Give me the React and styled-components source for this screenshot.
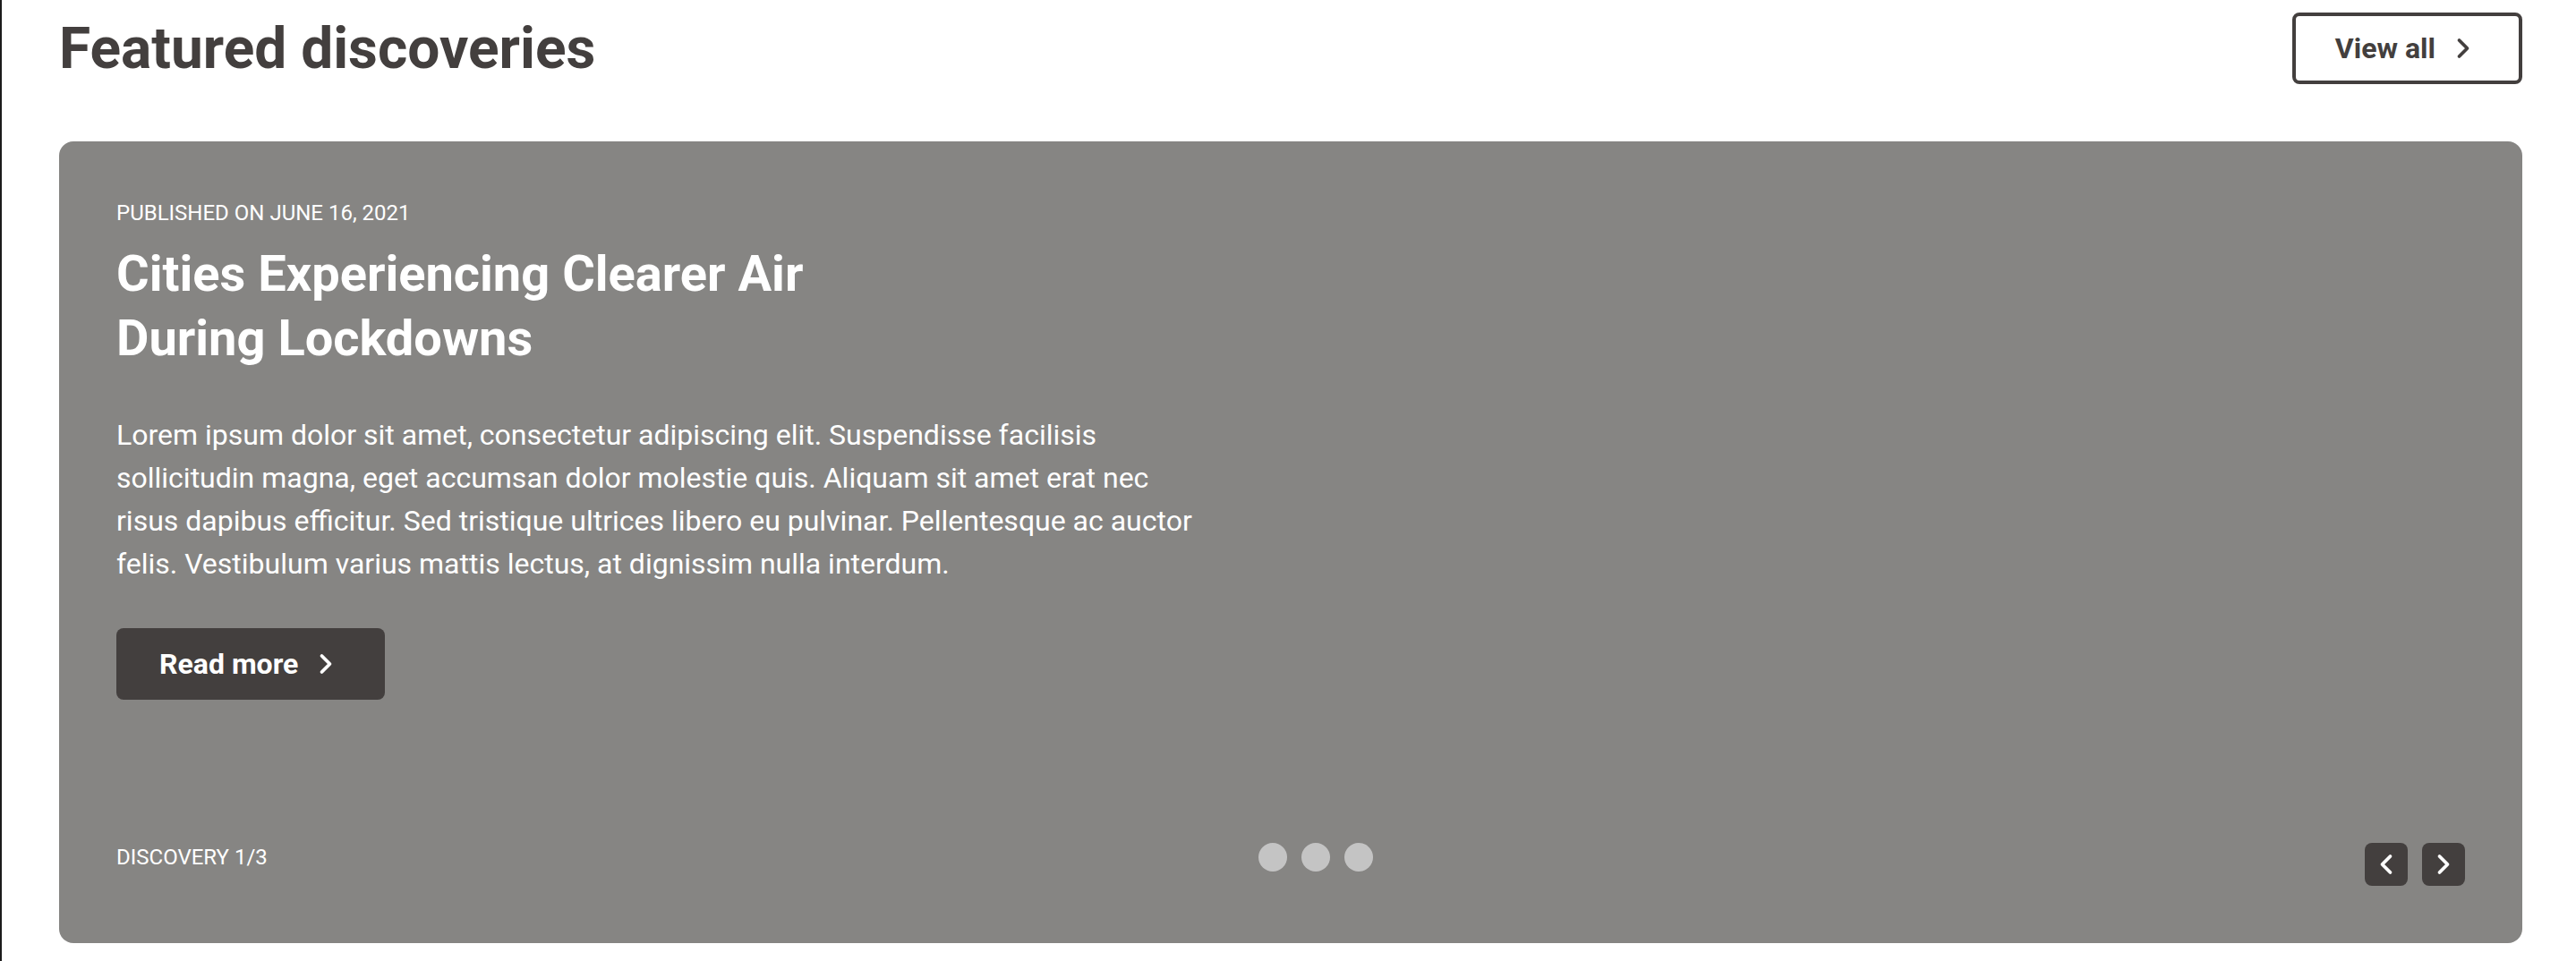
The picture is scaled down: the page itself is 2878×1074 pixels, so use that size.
import React, { useState } from 'react'
import styled, { createGlobalStyle } from 'styled-components'
import { ChevronLeft, ChevronRight } from 'lucide-react'

const GlobalStyle = createGlobalStyle`
    html, body {
        margin: 0;
        padding: 0;
        background: #ffffff;
    }
    * {
        box-sizing: border-box;
    }
`

const Page = styled.div`
    min-height: 100vh;
    border-left: 2px solid #1c1b1b;
    padding: 14px 60px 20px 64px;
    font-family: Roboto, 'Liberation Sans', sans-serif;
    color: #433f3e;
`

const Header = styled.div`
    display: flex;
    align-items: center;
    justify-content: space-between;
    margin-bottom: 64px;
`

const Title = styled.h2`
    margin: 0;
    font-size: 64px;
    font-weight: 700;
    line-height: 77px;
    color: #433f3e;
`

const Button = styled.button`
    display: inline-flex;
    align-items: center;
    gap: 13px;
    height: 80px;
    padding: 0 ${({ $outline }) => ($outline ? '44px' : '48px')};
    border: ${({ $outline }) => ($outline ? '4px solid #433f3e' : 'none')};
    border-radius: 8px;
    background: ${({ $outline }) => ($outline ? '#ffffff' : '#433f3e')};
    color: ${({ $outline }) => ($outline ? '#433f3e' : '#ffffff')};
    font-family: Roboto, 'Liberation Sans', sans-serif;
    font-size: 32px;
    font-weight: 700;
    line-height: 1;
    cursor: pointer;
`

const Card = styled.section`
    display: flex;
    flex-direction: column;
    justify-content: space-between;
    min-height: 896px;
    padding: 64px;
    border-radius: 16px;
    background: #868583;
    color: #ffffff;
`

const Content = styled.div`
    display: flex;
    flex-direction: column;
    align-items: flex-start;
`

const Meta = styled.div`
    font-size: 24px;
    line-height: 32px;
    text-transform: uppercase;
`

const Heading = styled.h3`
    margin: 16px 0 0;
    max-width: 880px;
    font-size: 56px;
    font-weight: 700;
    line-height: 72px;
`

const Body = styled.p`
    margin: 48px 0 48px;
    max-width: 1212px;
    font-size: 32px;
    line-height: 48px;
`

const Footer = styled.div`
    display: flex;
    align-items: flex-start;
    justify-content: space-between;
`

const Dots = styled.div`
    display: flex;
    gap: 16px;
`

const Dot = styled.span`
    width: 32px;
    height: 32px;
    border-radius: 50%;
    background: #c4c4c4;
    opacity: ${({ $active }) => ($active ? 1 : 1)};
`

const Nav = styled.div`
    display: flex;
    gap: 16px;
`

const NavButton = styled.button`
    display: flex;
    align-items: center;
    justify-content: center;
    width: 48px;
    height: 48px;
    padding: 0;
    border: none;
    border-radius: 8px;
    background: #433f3e;
    color: #ffffff;
    cursor: pointer;
`

const discoveries = [
    {
        date: 'June 16, 2021',
        title: 'Cities Experiencing Clearer Air During Lockdowns',
        text: 'Lorem ipsum dolor sit amet, consectetur adipiscing elit. Suspendisse facilisis sollicitudin magna, eget accumsan dolor molestie quis. Aliquam sit amet erat nec risus dapibus efficitur. Sed tristique ultrices libero eu pulvinar. Pellentesque ac auctor felis. Vestibulum varius mattis lectus, at dignissim nulla interdum.'
    },
    {
        date: 'May 2, 2021',
        title: 'Glaciers Retreating Faster Than Expected',
        text: 'Lorem ipsum dolor sit amet, consectetur adipiscing elit.'
    },
    {
        date: 'April 9, 2021',
        title: 'Night Lights Reveal Urban Growth',
        text: 'Lorem ipsum dolor sit amet, consectetur adipiscing elit.'
    }
]

export default function App() {
    const [index, setIndex] = useState(0)
    const item = discoveries[index]
    const total = discoveries.length

    return (
        <>
            <GlobalStyle />
            <Page>
                <Header>
                    <Title>{'Featured discoveries'}</Title>
                    <Button $outline>
                        {'View all'}
                        <ChevronRight size={36} strokeWidth={2.5} />
                    </Button>
                </Header>
                <Card>
                    <Content>
                        <Meta>{`Published on ${item.date}`}</Meta>
                        <Heading>{item.title}</Heading>
                        <Body>{item.text}</Body>
                        <Button>
                            {'Read more'}
                            <ChevronRight size={36} strokeWidth={2.5} />
                        </Button>
                    </Content>
                    <Footer>
                        <Meta>{`Discovery ${index + 1}/${total}`}</Meta>
                        <Dots>
                            {discoveries.map((d, i) => (
                                <Dot key={d.title} $active={i === index} />
                            ))}
                        </Dots>
                        <Nav>
                            <NavButton onClick={() => setIndex((index + total - 1) % total)}>
                                <ChevronLeft size={36} strokeWidth={2.5} />
                            </NavButton>
                            <NavButton onClick={() => setIndex((index + 1) % total)}>
                                <ChevronRight size={36} strokeWidth={2.5} />
                            </NavButton>
                        </Nav>
                    </Footer>
                </Card>
            </Page>
        </>
    )
}
